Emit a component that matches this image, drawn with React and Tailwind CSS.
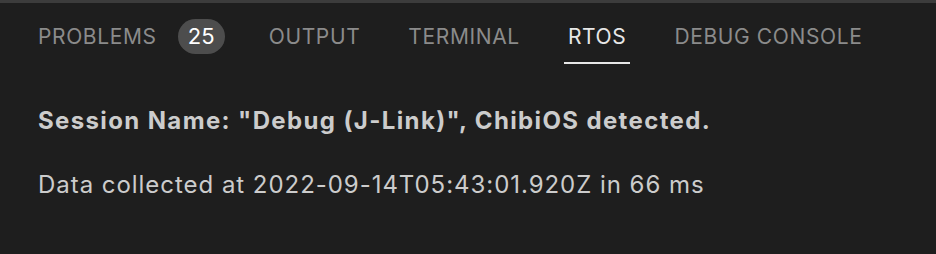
export default function App() {
  const tabs = [
    { label: 'PROBLEMS', badge: '25' },
    { label: 'OUTPUT' },
    { label: 'TERMINAL' },
    { label: 'RTOS', active: true },
    { label: 'DEBUG CONSOLE' },
  ];
  return (
    <div className="w-[936px] h-[254px] bg-[#1e1e1e] border-t-[3px] border-[#3c3c3c] font-['Inter',sans-serif] overflow-hidden">
      <div className="flex items-center pl-[38px] h-[67px]">
        {tabs.map((t, i) => (
          <div key={t.label} className={`relative flex items-center h-full ${i > 0 ? (i === 1 ? 'ml-[44px]' : 'ml-[48px]') : ''}`}>
            <span className={`text-[21px] tracking-[0.03em] ${t.active ? 'text-[#e7e7e7]' : 'text-[#8b8b8b]'}`}>{t.label}</span>
            {t.badge && (
              <span className="ml-[21px] flex items-center justify-center w-[47px] h-[35px] rounded-full bg-[#4d4d4d] text-white text-[22px]">{t.badge}</span>
            )}
            {t.active && (
              <span className="absolute left-[-4px] right-[-4px] bottom-[6px] h-[2px] bg-[#e7e7e7]" />
            )}
          </div>
        ))}
      </div>
      <div className="pl-[38px] pt-[37px] text-[#cccccc]">
        <div className="text-[24px] font-bold leading-[28px] tracking-[0.057em]">Session Name: "Debug (J-Link)", ChibiOS detected.</div>
        <div className="text-[24px] leading-[28px] mt-[36px] tracking-[0.04em]">Data collected at 2022-09-14T05:43:01.920Z in 66 ms</div>
      </div>
    </div>
  );
}
